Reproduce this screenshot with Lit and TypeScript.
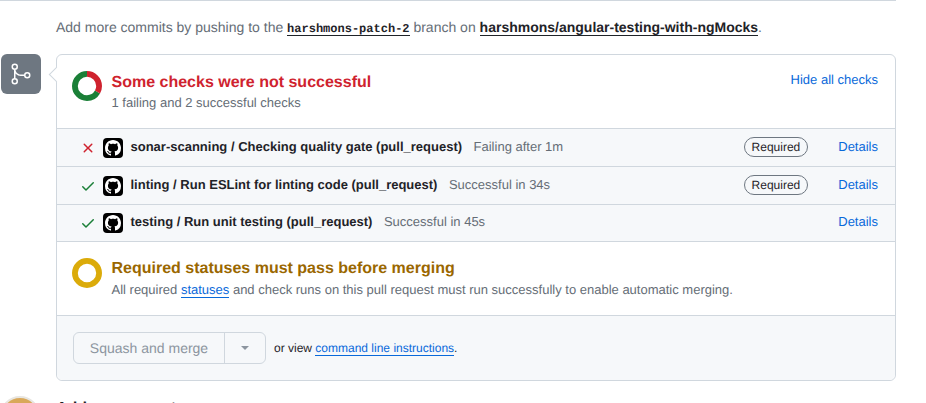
import { LitElement, html, css, svg } from "lit";
import { customElement } from "lit/decorators.js";

const MARK = "M8 0c4.42 0 8 3.58 8 8a8.013 8.013 0 0 1-5.45 7.59c-.4.08-.55-.17-.55-.38 0-.27.01-1.13.01-2.2 0-.75-.25-1.23-.54-1.48 1.78-.2 3.65-.88 3.65-3.95 0-.88-.31-1.59-.82-2.15.08-.2.36-1.02-.08-2.12 0 0-.67-.22-2.2.82-.64-.18-1.32-.27-2-.27-.68 0-1.36.09-2 .27-1.53-1.03-2.2-.82-2.2-.82-.44 1.1-.16 1.92-.08 2.12-.51.56-.82 1.28-.82 2.15 0 3.06 1.86 3.75 3.64 3.95-.23.2-.44.55-.51 1.07-.46.21-1.61.55-2.33-.66-.15-.24-.6-.83-1.23-.82-.67.01-.27.38.01.53.34.19.73.9.82 1.13.16.45.68 1.31 2.69.94 0 .67.01 1.3.01 1.49 0 .21-.15.45-.55.38A7.995 7.995 0 0 1 0 8c0-4.42 3.58-8 8-8Z";
const X = "M3.72 3.72a.75.75 0 0 1 1.06 0L8 6.94l3.22-3.22a.749.749 0 0 1 1.275.326.749.749 0 0 1-.215.734L9.06 8l3.22 3.22a.749.749 0 0 1-.326 1.275.749.749 0 0 1-.734-.215L8 9.06l-3.22 3.22a.751.751 0 0 1-1.042-.018.751.751 0 0 1-.018-1.042L6.94 8 3.72 4.78a.75.75 0 0 1 0-1.06Z";
const CHECK = "M13.78 4.22a.75.75 0 0 1 0 1.06l-7.25 7.25a.75.75 0 0 1-1.06 0L2.22 9.28a.751.751 0 0 1 .018-1.042.751.751 0 0 1 1.042-.018L6 10.94l6.72-6.72a.75.75 0 0 1 1.06 0Z";
const MERGE = "M15 13.25a3.25 3.25 0 1 1 6.5 0 3.25 3.25 0 0 1-6.5 0Zm-12.5 6a3.25 3.25 0 1 1 6.5 0 3.25 3.25 0 0 1-6.5 0Zm0-14.5a3.25 3.25 0 1 1 6.5 0 3.25 3.25 0 0 1-6.5 0ZM5.75 6.5a1.75 1.75 0 1 0-.001-3.501A1.75 1.75 0 0 0 5.75 6.5Zm0 14.5a1.75 1.75 0 1 0-.001-3.501A1.75 1.75 0 0 0 5.75 21Zm12.5-6a1.75 1.75 0 1 0-.001-3.501A1.75 1.75 0 0 0 18.25 15Z M6.5 7.25c0 2.9 2.35 5.25 5.25 5.25h4.5V14h-4.5A6.75 6.75 0 0 1 5 7.25a.75.75 0 0 1 1.5 0Z M5.75 16.75A.75.75 0 0 1 5 16V8a.75.75 0 0 1 1.5 0v8a.75.75 0 0 1-.75.75Z";

interface Check { ok: boolean; name: string; note: string; required: boolean; h: string }
const CHECKS: Check[] = [
  { ok: false, name: "sonar-scanning / Checking quality gate (pull_request)", note: "Failing after 1m", required: true, h: "r1" },
  { ok: true, name: "linting / Run ESLint for linting code (pull_request)", note: "Successful in 34s", required: true, h: "r2" },
  { ok: true, name: "testing / Run unit testing (pull_request)", note: "Successful in 45s", required: false, h: "r3" },
];

@customElement("app-root")
export class AppRoot extends LitElement {
  static styles = css`
    :host { display: block; width: 926px; height: 403px; overflow: hidden; background: #fff; font-family: "Liberation Sans", Arial, sans-serif; font-size: 14px; color: #1f2328; text-rendering: geometricPrecision; }
    * { box-sizing: border-box; }
    a { text-decoration: none; }
    .page { width: 896px; border-top: 1px solid #d0d7de; padding-top: 16px; height: 403px; }
    .hint { margin-left: 56px; line-height: 20px; color: #656d76; height: 37px; }
    .hint a { color: #1f2328; font-weight: 700; border-bottom: 1px solid #1f2328; }
    .hint code { font-family: "Liberation Mono", monospace; font-size: 12px; font-weight: 700; }
    .main { display: flex; align-items: flex-start; padding-left: 1px; }
    .badge { width: 40px; height: 40px; border-radius: 6px; background: #6e7781; display: flex; align-items: center; justify-content: center; flex: none; }
    .badge svg { width: 24px; height: 24px; fill: #fff; }
    .card { position: relative; margin-left: 15px; flex: 1; border: 1px solid #d0d7de; border-radius: 6px; background: #fff; }
    .card::before { content: ""; position: absolute; left: -6px; top: 14px; width: 10px; height: 10px; background: #fff; border-left: 1px solid #d0d7de; border-bottom: 1px solid #d0d7de; transform: rotate(45deg); }
    .head { position: relative; display: flex; height: 74px; padding: 16px 17px 0 15px; border-bottom: 1px solid #d0d7de; }
    .ring { width: 30px; height: 30px; flex: none; margin-right: 9.5px; }
    .ring circle { fill: none; stroke-width: 5.8; }
    .titles { flex: 1; }
    .title { font-size: 16px; font-weight: 700; line-height: 22px; color: #cf222e; }
    .head .title { padding-top: 1px; line-height: 21px; }
    .title.warn { color: #9a6700; }
    .sub { font-size: 13px; line-height: 19px; color: #656d76; }
    .sub a { color: #0969da; border-bottom: 1px solid #0969da; }
    .toggle { font-size: 13px; color: #0969da; line-height: 18px; }
    .row { display: flex; align-items: center; padding: 0 17px 0 0; background: #f6f8fa; border-bottom: 1px solid #d0d7de; font-size: 13px; }
    .r1, .r2 { height: 38px; }
    .r3 { height: 37px; }
    .st { width: 16px; height: 16px; margin-left: 23px; flex: none; }
    .st.bad { fill: #cf222e; }
    .st.good { fill: #1a7f37; }
    .app { width: 20px; height: 20px; border-radius: 4px; background: #000; margin-left: 7px; display: flex; align-items: center; justify-content: center; flex: none; }
    .app svg { width: 16px; height: 16px; fill: #fff; }
    .name { font-weight: 700; margin: 0 0 2px 7.5px; color: #1f2328; white-space: nowrap; }
    .note { margin: 0 0 2px 11.5px; color: #656d76; flex: 1; white-space: nowrap; }
    .r3 .name, .r3 .note, .r3 .details { margin-bottom: 3px; }
    .pill { font-size: 12px; line-height: 18px; padding: 0 7px; border: 1px solid #6e7781; border-radius: 10px; color: #1f2328; margin: 0 30px 1px 0; }
    .details { color: #0969da; margin-bottom: 2px; }
    .req { height: 74px; padding: 16px 17px 0 15px; display: flex; border-bottom: 1px solid #d0d7de; }
    .foot { height: 64px; background: #f6f8fa; border-radius: 0 0 6px 6px; padding: 16px; display: flex; align-items: center; font-size: 12px; }
    .group { display: flex; height: 32px; border: 1px solid #d0d7de; border-radius: 6px; color: #8c959f; }
    .main-btn { width: 151px; display: flex; align-items: center; justify-content: center; border-right: 1px solid #d0d7de; font-size: 14px; }
    .drop { width: 40px; display: flex; align-items: center; justify-content: center; }
    .caret { width: 0; height: 0; border: 4px solid transparent; border-top-color: #8c959f; border-bottom: 0; }
    .or { margin: 0 0 0 8px; }
    .or a { color: #0969da; border-bottom: 1px solid #0969da; }
    .next { display: flex; margin-top: 15px; }
    .av { width: 40px; height: 40px; border-radius: 50%; background: #d9a85a; border: 2px solid #e8e6e1; flex: none; }
    .next b { margin: 3px 0 0 16px; font-size: 16px; line-height: 20px; }
  `;

  ring(parts: [string, number, number][]) {
    return html`<svg class="ring" viewBox="0 0 30 30">${parts.map(([c, start, len]) => svg`<circle cx="15" cy="15" r="12.1" pathLength="100" stroke=${c} stroke-dasharray="${len} ${100 - len}" stroke-dashoffset=${-start} transform="rotate(-90 15 15)"></circle>`)}</svg>`;
  }

  render() {
    return html`<div class="page">
      <div class="hint">Add more commits by pushing to the <a href="#"><code>harshmons-patch-2</code></a> branch on <a href="#">harshmons/angular-testing-with-ngMocks</a>.</div>
      <div class="main">
        <div class="badge"><svg viewBox="0 0 24 24"><path d=${MERGE}></path></svg></div>
        <div class="card">
          <div class="head">
            ${this.ring([["#1a7f37", 33.33, 66.67], ["#cf222e", 0, 33.33]])}
            <div class="titles">
              <div class="title">Some checks were not successful</div>
              <div class="sub">1 failing and 2 successful checks</div>
            </div>
            <a class="toggle" href="#">Hide all checks</a>
          </div>
          ${CHECKS.map((c) => html`<div class="row ${c.h}">
            <svg class="st ${c.ok ? "good" : "bad"}" viewBox="0 0 16 16"><path d=${c.ok ? CHECK : X}></path></svg>
            <div class="app"><svg viewBox="0 0 16 16"><path d=${MARK}></path></svg></div>
            <span class="name">${c.name}</span>
            <span class="note">${c.note}</span>
            ${c.required ? html`<span class="pill">Required</span>` : ""}
            <a class="details" href="#">Details</a>
          </div>`)}
          <div class="req">
            ${this.ring([["#dbab0a", 0, 100]])}
            <div class="titles">
              <div class="title warn">Required statuses must pass before merging</div>
              <div class="sub">All required <a href="#">statuses</a> and check runs on this pull request must run successfully to enable automatic merging.</div>
            </div>
          </div>
          <div class="foot">
            <div class="group">
              <div class="main-btn">Squash and merge</div>
              <div class="drop"><span class="caret"></span></div>
            </div>
            <span class="or">or view <a href="#">command line instructions</a>.</span>
          </div>
        </div>
      </div>
      <div class="next"><div class="av"></div><b>Add a comment</b></div>
    </div>`;
  }
}
